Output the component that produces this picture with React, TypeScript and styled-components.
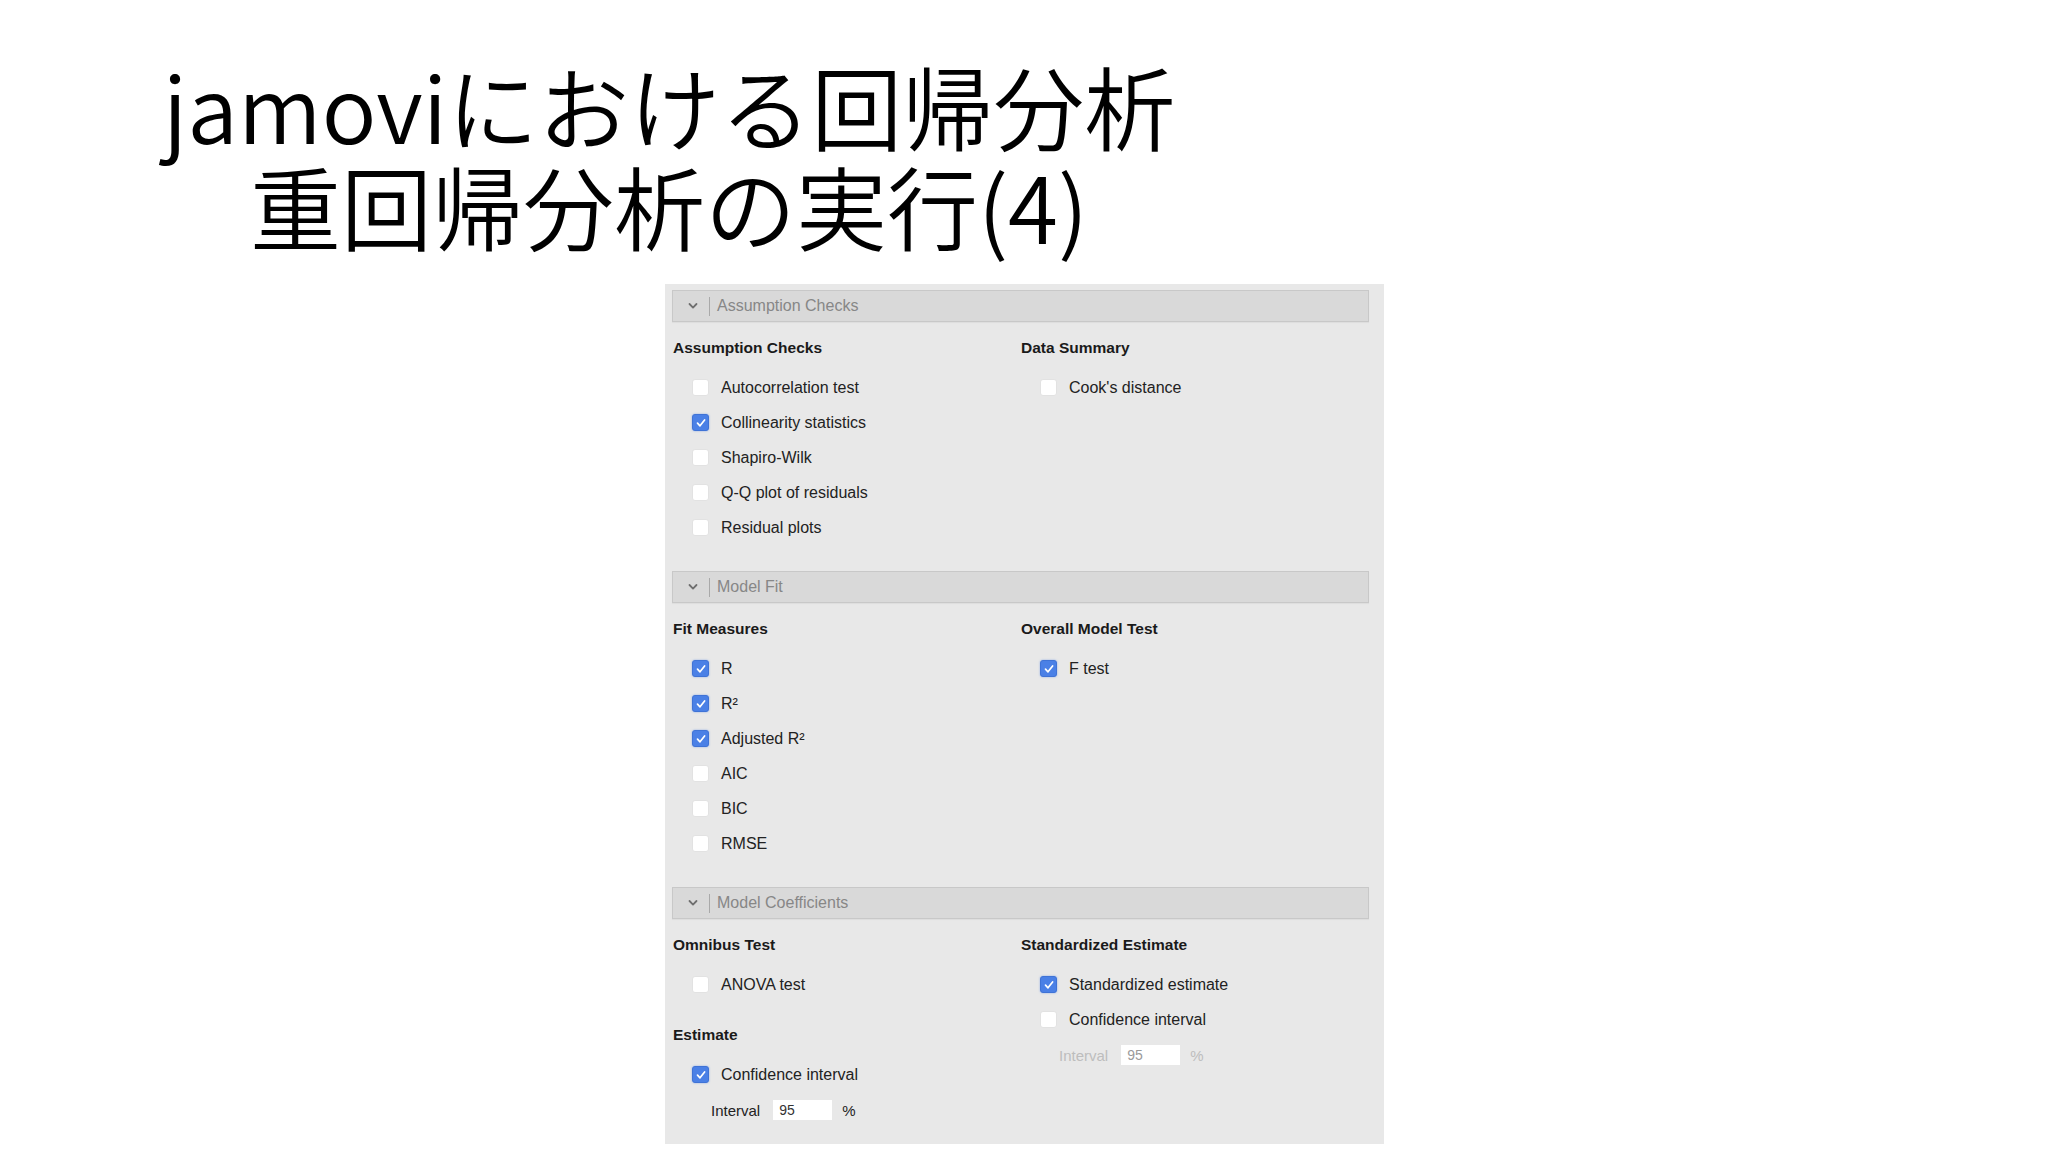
import React, { FC } from 'react';
import styled, { createGlobalStyle } from 'styled-components';

const GlobalStyle = createGlobalStyle`
	html, body {
		margin: 0;
		padding: 0;
		background: #ffffff;
	}
	body {
		width: 2048px;
		height: 1152px;
		overflow: hidden;
		font-family: 'Liberation Sans', Arial, sans-serif;
	}
`;

type Option = { label: string; checked?: boolean };
type Interval = { value: string; disabled?: boolean };
type Group = { title: string; options: Option[]; interval?: Interval };
type Section = { name: string; left: Group[]; right: Group[] };

const sections: Section[] = [
	{
		name: 'Assumption Checks',
		left: [
			{
				title: 'Assumption Checks',
				options: [
					{ label: 'Autocorrelation test' },
					{ label: 'Collinearity statistics', checked: true },
					{ label: 'Shapiro-Wilk' },
					{ label: 'Q-Q plot of residuals' },
					{ label: 'Residual plots' },
				],
			},
		],
		right: [{ title: 'Data Summary', options: [{ label: "Cook's distance" }] }],
	},
	{
		name: 'Model Fit',
		left: [
			{
				title: 'Fit Measures',
				options: [
					{ label: 'R', checked: true },
					{ label: 'R²', checked: true },
					{ label: 'Adjusted R²', checked: true },
					{ label: 'AIC' },
					{ label: 'BIC' },
					{ label: 'RMSE' },
				],
			},
		],
		right: [{ title: 'Overall Model Test', options: [{ label: 'F test', checked: true }] }],
	},
	{
		name: 'Model Coefficients',
		left: [
			{ title: 'Omnibus Test', options: [{ label: 'ANOVA test' }] },
			{
				title: 'Estimate',
				options: [{ label: 'Confidence interval', checked: true }],
				interval: { value: '95' },
			},
		],
		right: [
			{
				title: 'Standardized Estimate',
				options: [
					{ label: 'Standardized estimate', checked: true },
					{ label: 'Confidence interval' },
				],
				interval: { value: '95', disabled: true },
			},
		],
	},
];

const CheckBox: FC<{ checked?: boolean }> = ({ checked }) => (
	<Box $checked={checked}>
		{checked && (
			<svg width="12" height="12" viewBox="0 0 12 12">
				<polyline points="2.5,6.2 5,8.8 9.6,3" fill="none" stroke="#ffffff" strokeWidth="1.7" strokeLinecap="round" strokeLinejoin="round" />
			</svg>
		)}
	</Box>
);

const Chevron = () => (
	<svg width="10" height="8" viewBox="0 0 10 8">
		<polyline points="1.5,2 5,5.6 8.5,2" fill="none" stroke="#6f6f6f" strokeWidth="1.8" strokeLinecap="round" strokeLinejoin="round" />
	</svg>
);

const OptionGroup: FC<{ group: Group }> = ({ group }) => (
	<GroupBlock>
		<GroupTitle>{group.title}</GroupTitle>
		{group.options.map((o) => (
			<OptionRow key={o.label}>
				<CheckBox checked={o.checked} />
				<OptionLabel>{o.label}</OptionLabel>
			</OptionRow>
		))}
		{group.interval && (
			<IntervalRow $disabled={group.interval.disabled}>
				<span>Interval</span>
				<IntervalInput $disabled={group.interval.disabled}>{group.interval.value}</IntervalInput>
				<span>%</span>
			</IntervalRow>
		)}
	</GroupBlock>
);

const App: FC = () => {
	return (
		<>
			<GlobalStyle />
			<Slide>
				<Title>
					<TitleLine>jamoviにおける回帰分析</TitleLine>
					<TitleLine>重回帰分析の実行(4)</TitleLine>
				</Title>
				<Panel>
					{sections.map((s) => (
						<div key={s.name}>
							<SectionHeader>
								<Chevron />
								<Divider />
								<HeaderText>{s.name}</HeaderText>
							</SectionHeader>
							<Columns>
								<Column>
									{s.left.map((g) => (
										<OptionGroup key={g.title} group={g} />
									))}
								</Column>
								<Column>
									{s.right.map((g) => (
										<OptionGroup key={g.title} group={g} />
									))}
								</Column>
							</Columns>
						</div>
					))}
				</Panel>
			</Slide>
		</>
	);
};

const Slide = styled.div`
	width: 2048px;
	height: 1152px;
	padding-top: 54px;
	box-sizing: border-box;
	overflow: hidden;
`;

const Title = styled.h1`
	margin: 0;
	width: 1338px;
	display: flex;
	flex-direction: column;
	align-items: center;
	font-family: 'Noto Sans CJK JP', 'Noto Sans', sans-serif;
	font-weight: 350;
	font-size: 91px;
	color: #000000;
`;

const TitleLine = styled.span`
	display: block;
	height: 100px;
	line-height: 100px;
	white-space: nowrap;
`;

const Panel = styled.div`
	margin: 30px 0 0 665px;
	width: 719px;
	height: 860px;
	box-sizing: border-box;
	padding: 6px 15px 0 7px;
	background: #e8e8e8;
`;

const SectionHeader = styled.div`
	height: 32px;
	box-sizing: border-box;
	display: flex;
	align-items: center;
	padding-left: 15px;
	background: #d9d9d9;
	border: 1px solid #c8c8c8;
	box-shadow: 0 1px 1px rgba(0, 0, 0, 0.04);
`;

const Divider = styled.span`
	width: 1px;
	height: 19px;
	background: #a9a9a9;
	margin: 0 7px 0 11px;
`;

const HeaderText = styled.span`
	font-size: 16px;
	color: #878787;
`;

const Columns = styled.div`
	display: grid;
	grid-template-columns: 348px 1fr;
	padding: 16px 0 26px 1px;
`;

const Column = styled.div`
	display: flex;
	flex-direction: column;
	gap: 23px;
`;

const GroupBlock = styled.div`
	display: flex;
	flex-direction: column;
`;

const GroupTitle = styled.div`
	height: 20px;
	line-height: 20px;
	margin-bottom: 12px;
	font-size: 15.5px;
	font-weight: bold;
	color: #1a1a1a;
`;

const OptionRow = styled.div`
	height: 35px;
	display: flex;
	align-items: center;
	gap: 12px;
	padding-left: 19px;
`;

const Box = styled.span<{ $checked?: boolean }>`
	width: 17px;
	height: 17px;
	box-sizing: border-box;
	border-radius: 3px;
	display: flex;
	align-items: center;
	justify-content: center;
	background: ${(p) => (p.$checked ? '#4a80e6' : '#ffffff')};
	border: 1px solid ${(p) => (p.$checked ? '#3f73d6' : '#e2e2e2')};
	box-shadow: ${(p) => (p.$checked ? '0 0 2px rgba(70, 125, 230, 0.6)' : 'none')};
`;

const OptionLabel = styled.span`
	font-size: 16px;
	color: #222222;
	white-space: nowrap;
`;

const IntervalRow = styled.div<{ $disabled?: boolean }>`
	height: 36px;
	display: flex;
	align-items: center;
	padding-left: 38px;
	gap: 8px;
	font-size: 15px;
	color: ${(p) => (p.$disabled ? '#bdbdbd' : '#222222')};
`;

const IntervalInput = styled.span<{ $disabled?: boolean }>`
	width: 59px;
	height: 20px;
	box-sizing: border-box;
	padding-left: 6px;
	margin-left: 5px;
	margin-right: 2px;
	background: #ffffff;
	font-size: 14px;
	line-height: 20px;
	color: ${(p) => (p.$disabled ? '#9a9a9a' : '#333333')};
`;

export default App;
